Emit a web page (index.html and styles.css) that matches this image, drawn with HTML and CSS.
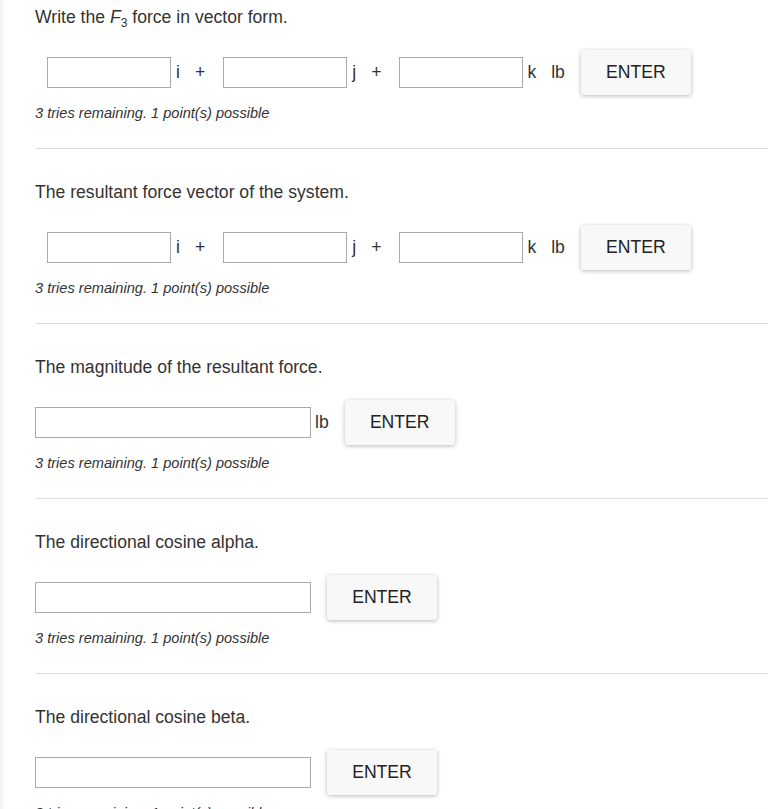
FILE: index.html
```html
<!DOCTYPE html>
<html>
<head>
<meta charset="utf-8">
<link rel="stylesheet" href="styles.css">
</head>
<body>
<div class="page">
  <div class="problem">
    <p class="prompt">Write the <i>F</i><sub>3</sub> force in vector form.</p>
    <div class="row indent">
      <input class="field small" type="text"><span class="unit">i</span><span class="op">+</span>
      <input class="field small gap" type="text"><span class="unit">j</span><span class="op">+</span>
      <input class="field small gap" type="text"><span class="unit tight">k</span><span class="op">lb</span>
      <button class="enter">ENTER</button>
    </div>
    <p class="tries">3 tries remaining. 1 point(s) possible</p>
  </div>
  <div class="problem">
    <p class="prompt">The resultant force vector of the system.</p>
    <div class="row indent">
      <input class="field small" type="text"><span class="unit">i</span><span class="op">+</span>
      <input class="field small gap" type="text"><span class="unit">j</span><span class="op">+</span>
      <input class="field small gap" type="text"><span class="unit tight">k</span><span class="op">lb</span>
      <button class="enter">ENTER</button>
    </div>
    <p class="tries">3 tries remaining. 1 point(s) possible</p>
  </div>
  <div class="problem">
    <p class="prompt">The magnitude of the resultant force.</p>
    <div class="row">
      <input class="field wide" type="text"><span class="unit tight">lb</span>
      <button class="enter">ENTER</button>
    </div>
    <p class="tries">3 tries remaining. 1 point(s) possible</p>
  </div>
  <div class="problem">
    <p class="prompt">The directional cosine alpha.</p>
    <div class="row">
      <input class="field wide" type="text">
      <button class="enter">ENTER</button>
    </div>
    <p class="tries">3 tries remaining. 1 point(s) possible</p>
  </div>
  <div class="problem">
    <p class="prompt">The directional cosine beta.</p>
    <div class="row">
      <input class="field wide" type="text">
      <button class="enter">ENTER</button>
    </div>
    <p class="tries">3 tries remaining. 1 point(s) possible</p>
  </div>
</div>
</body>
</html>
```

FILE: styles.css
```css
html, body {
  margin: 0;
  padding: 0;
  background: #fff;
}
body {
  font-family: "Liberation Sans", Arial, sans-serif;
  color: #333;
  overflow: hidden;
}
.page {
  height: 809px;
  overflow: hidden;
  padding-left: 35px;
  box-shadow: inset 5px 0 5px -3px rgba(0, 0, 0, 0.07);
}
.problem {
  box-sizing: border-box;
  padding-top: 7px;
  height: 149px;
  border-bottom: 1px solid #dddddd;
  margin-bottom: 26px;
}
.prompt {
  margin: 0;
  font-size: 17.6px;
  line-height: 20px;
  height: 20px;
}
.prompt i {
  font-style: italic;
}
.prompt sub {
  font-size: 12px;
  line-height: 0;
  vertical-align: -4px;
}
.row {
  display: flex;
  align-items: center;
  height: 45px;
  margin-top: 23px;
  font-size: 17.6px;
}
.indent {
  padding-left: 12px;
}
.field {
  box-sizing: border-box;
  height: 31px;
  border: 1px solid #aaaaaa;
  background: #fff;
  margin: 0;
  padding: 0 6px;
  font: inherit;
}
.small {
  width: 124px;
}
.wide {
  width: 276px;
}
.gap {
  margin-left: 18px;
}
.unit {
  margin-left: 5px;
}
.unit.tight {
  margin-left: 4px;
}
.op {
  margin-left: 15px;
}
.enter {
  margin-left: 16px;
  width: 110px;
  height: 45px;
  border: none;
  border-radius: 3px;
  background: #f8f8f8;
  box-shadow: 0 1px 4px rgba(0, 0, 0, 0.28);
  font-family: "Liberation Sans", Arial, sans-serif;
  font-size: 17.6px;
  color: #222;
  padding: 0;
}
.tries {
  margin: 10px 0 0;
  font-size: 14.6px;
  line-height: 17px;
  font-style: italic;
  color: #333;
}
```
